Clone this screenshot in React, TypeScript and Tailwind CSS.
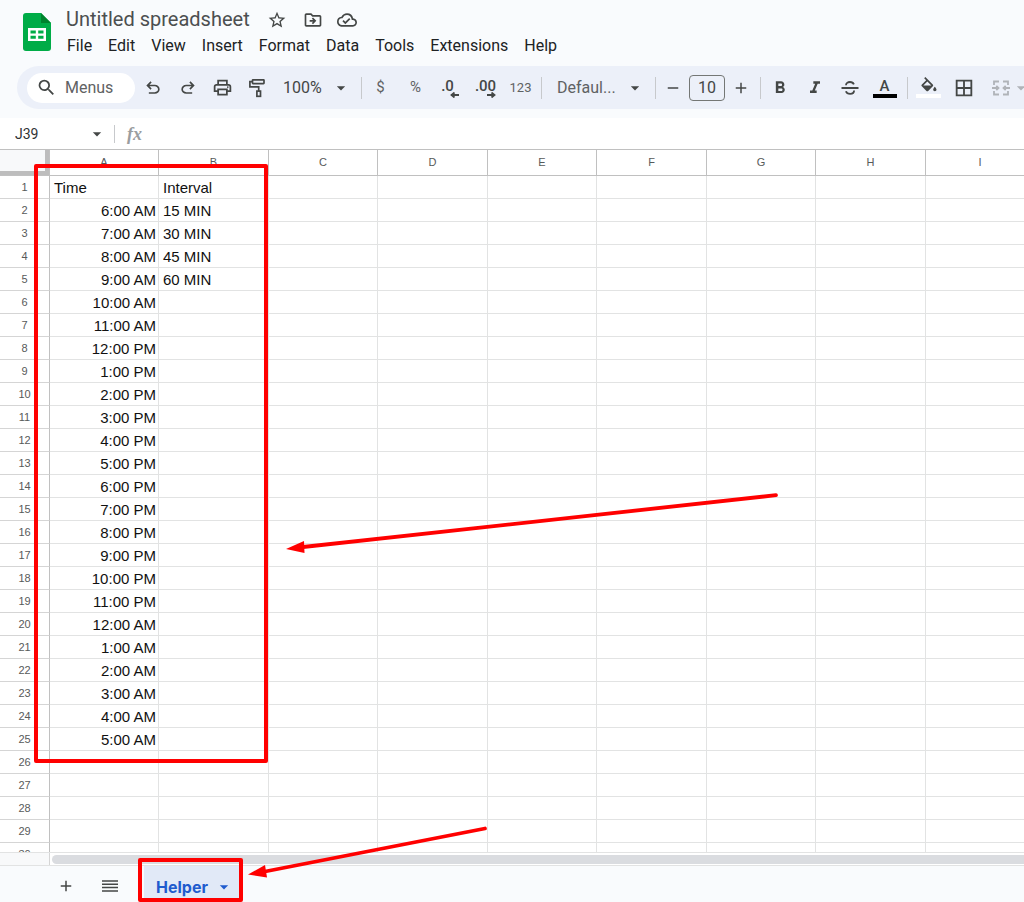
import React from "react";
import {
  MdAdd,
  MdArrowDropDown,
  MdBorderAll,
  MdFormatBold,
  MdFormatColorFill,
  MdFormatItalic,
  MdOutlineCloudDone,
  MdOutlineDriveFileMove,
  MdOutlinePrint,
  MdRemove,
  MdSearch,
  MdStarBorder,
} from "react-icons/md";

const menus = ["File", "Edit", "View", "Insert", "Format", "Data", "Tools", "Extensions", "Help"];

const columns = [
  { name: "A", width: "w-[109px]" },
  { name: "B", width: "w-[110px]" },
  { name: "C", width: "w-[109px]" },
  { name: "D", width: "w-[110px]" },
  { name: "E", width: "w-[109px]" },
  { name: "F", width: "w-[110px]" },
  { name: "G", width: "w-[109px]" },
  { name: "H", width: "w-[110px]" },
  { name: "I", width: "" },
];

const times = [
  "Time", "6:00 AM", "7:00 AM", "8:00 AM", "9:00 AM", "10:00 AM", "11:00 AM", "12:00 PM",
  "1:00 PM", "2:00 PM", "3:00 PM", "4:00 PM", "5:00 PM", "6:00 PM", "7:00 PM", "8:00 PM",
  "9:00 PM", "10:00 PM", "11:00 PM", "12:00 AM", "1:00 AM", "2:00 AM", "3:00 AM", "4:00 AM", "5:00 AM",
];
const intervals = ["Interval", "15 MIN", "30 MIN", "45 MIN", "60 MIN"];
const rows = Array.from({ length: 30 }, (_, i) => i);

function SheetsLogo() {
  return (
    <svg viewBox="0 0 28 38" className="h-[38px] w-7 shrink-0" aria-hidden="true">
      <path d="M3 0h15l10 10v25a3 3 0 0 1-3 3H3a3 3 0 0 1-3-3V3a3 3 0 0 1 3-3z" fill="#00ac47" />
      <path d="M18 0l10 10H18z" fill="#00832d" />
      <path d="M5 15h18v13H5zM7.500 17.500v3h5.300v-3zM15.200 17.500v3h5.300v-3zM7.500 22.800v3h5.300v-3zM15.200 22.800v3h5.300v-3z" fill="#fff" fillRule="evenodd" />
    </svg>
  );
}

function UndoIcon() {
  return (
    <svg viewBox="0 -960 960 960" className="size-5" fill="currentColor" aria-hidden="true">
      <path d="M280-200v-80h284q63 0 109.500-40T720-420q0-60-46.500-100T564-560H312l104 104-56 56-200-200 200-200 56 56-104 104h252q97 0 166.500 63T800-420q0 94-69.500 157T564-200H280Z" />
    </svg>
  );
}

function RedoIcon() {
  return (
    <svg viewBox="0 -960 960 960" className="size-5" fill="currentColor" aria-hidden="true">
      <path d="M396-200q-97 0-166.500-63T160-420q0-94 69.500-157T396-640h252L544-744l56-56 200 200-200 200-56-56 104-104H396q-63 0-109.500 40T240-420q0 60 46.500 100T396-280h284v80H396Z" />
    </svg>
  );
}

function PaintIcon() {
  return (
    <svg viewBox="0 0 20 20" className="size-5" fill="none" stroke="currentColor" strokeWidth="1.7" aria-hidden="true">
      <rect x="4.500" y="1.800" width="11.500" height="3.800" rx="0.500" />
      <path d="M4.500 3.700H1.900v5.200h8.800v4" />
      <rect x="8.900" y="13.100" width="3.600" height="5.200" />
    </svg>
  );
}

function StrikeIcon() {
  return (
    <svg viewBox="0 0 20 20" className="size-5" fill="none" stroke="currentColor" strokeWidth="1.8" aria-hidden="true">
      <path d="M1.500 10h17" />
      <path d="M6 7.200c0-2 1.700-3.200 4-3.200 1.800 0 3.200.8 3.900 2.300M5.900 13.300c.6 1.600 2.200 2.600 4.200 2.600 2.400 0 4-1.200 4-3.300" />
    </svg>
  );
}

function MergeIcon() {
  return (
    <svg viewBox="0 0 20 20" className="size-5 shrink-0" fill="none" stroke="currentColor" strokeWidth="1.800" aria-hidden="true">
      <path d="M8 3.500H3V7M12 3.500h5V7M8 16.500H3V13M12 16.500h5V13M1 10h6M19 10h-6M5.300 7.800L7.500 10l-2.200 2.200M14.700 7.800L12.500 10l2.200 2.200" />
    </svg>
  );
}

function SmallArrow({ flip = false }: { flip?: boolean }) {
  return (
    <svg viewBox="0 0 10 6" className="-ml-1 h-1.5 w-2.5 self-end" fill="none" stroke="currentColor" strokeWidth="1.8" aria-hidden="true">
      {flip ? <path d="M1 3h7M5.500 0.500L8.500 3L5.500 5.500" /> : <path d="M9 3H2M4.500 0.500L1.500 3L4.500 5.500" />}
    </svg>
  );
}

function Tool({ label, children }: { label: string; children: React.ReactNode }) {
  return (
    <button type="button" aria-label={label} className="flex h-8 w-[35px] shrink-0 items-center justify-center">
      {children}
    </button>
  );
}

function Divider() {
  return <span className="mx-px h-[22px] w-px shrink-0 bg-[#c7c9cc]" />;
}

export default function App() {
  return (
    <div className="relative flex h-screen flex-col overflow-hidden bg-[#f9fbfd] font-['Roboto',sans-serif] text-[#444746]">
      <header className="flex h-[66px] shrink-0 items-start gap-[15px] pl-[23px] pt-2">
        <div className="pt-[5px]">
          <SheetsLogo />
        </div>
        <div className="flex flex-col">
          <div className="flex h-[22px] items-center gap-3.5">
            <input aria-label="Document title" defaultValue="Untitled spreadsheet" className="w-[187px] bg-transparent text-xl leading-[22px] text-[#4c4f50] outline-none" />
            <button type="button" aria-label="Star" className="pr-0.5 pt-0.5"><MdStarBorder className="size-5" /></button>
            <button type="button" aria-label="Move" className="pt-0.5"><MdOutlineDriveFileMove className="size-5" /></button>
            <button type="button" aria-label="Document status" className="pt-0.5"><MdOutlineCloudDone className="size-5" /></button>
          </div>
          <nav className="flex h-8 items-center gap-4 pl-px text-base text-[#202224]">
            {menus.map((m) => (
              <button key={m} type="button">{m}</button>
            ))}
          </nav>
        </div>
      </header>

      <div className="ml-[17px] flex h-[43px] shrink-0 items-center overflow-hidden rounded-l-full bg-[#ecf0f9] pl-2.5">
        <label className="flex h-[30px] w-[108px] shrink-0 items-center gap-2 rounded-full bg-white pl-[9px]">
          <MdSearch className="size-[21px] shrink-0" />
          <input aria-label="Search the menus" placeholder="Menus" className="w-16 bg-transparent text-base outline-none placeholder:text-[#5f6263]" />
        </label>
        <Tool label="Undo"><UndoIcon /></Tool>
        <Tool label="Redo"><RedoIcon /></Tool>
        <Tool label="Print"><MdOutlinePrint className="size-[21px]" /></Tool>
        <Tool label="Paint format"><PaintIcon /></Tool>
        <label className="flex w-[85px] shrink-0 items-center pl-2">
          <select aria-label="Zoom" className="w-12 appearance-none bg-transparent text-base outline-none">
            <option>100%</option>
          </select>
          <MdArrowDropDown className="pointer-events-none size-5" />
        </label>
        <Divider />
        <Tool label="Format as currency"><span className="text-[15px] text-[#5f6263]">$</span></Tool>
        <Tool label="Format as percent"><span className="text-[15px] text-[#5f6263]">%</span></Tool>
        <Tool label="Decrease decimal places">
          <span className="flex h-5 items-start text-[15px] font-medium leading-4">.0<SmallArrow /></span>
        </Tool>
        <Tool label="Increase decimal places">
          <span className="flex h-5 items-start text-[15px] font-medium leading-4">.00<span className="-ml-1.5 flex self-end"><SmallArrow flip /></span></span>
        </Tool>
        <Tool label="More formats"><span className="text-[13px] text-[#5f6263]">123</span></Tool>
        <span className="w-0.5 shrink-0" />
        <Divider />
        <label className="flex w-[111px] shrink-0 items-center pl-3.5">
          <select aria-label="Font" className="w-[68px] appearance-none bg-transparent text-base text-[#5f6263] outline-none">
            <option>Defaul...</option>
          </select>
          <MdArrowDropDown className="pointer-events-none size-5" />
        </label>
        <Divider />
        <button type="button" aria-label="Decrease font size" className="flex w-8 shrink-0 justify-center"><MdRemove className="size-[18px]" /></button>
        <input aria-label="Font size" defaultValue="10" className="h-[26px] w-9 shrink-0 rounded-[4px] border border-[#747775] bg-transparent text-center text-base outline-none" />
        <button type="button" aria-label="Increase font size" className="flex w-8 shrink-0 justify-center"><MdAdd className="size-[18px]" /></button>
        <span className="w-0.5 shrink-0" />
        <Divider />
        <Tool label="Bold"><MdFormatBold className="size-5" /></Tool>
        <Tool label="Italic"><MdFormatItalic className="size-5" /></Tool>
        <Tool label="Strikethrough"><StrikeIcon /></Tool>
        <Tool label="Text color">
          <span className="flex w-6 flex-col items-center border-b-4 border-black text-[15px] font-medium leading-4">A</span>
        </Tool>
        <span className="w-1 shrink-0" />
        <Divider />
        <span className="w-0.5 shrink-0" />
        <Tool label="Fill color">
          <span className="flex w-[25px] flex-col items-center border-b-4 border-white pb-px">
            <svg viewBox="0 0 24 19" className="h-4 w-5" aria-hidden="true"><MdFormatColorFill size={24} /></svg>
          </span>
        </Tool>
        <Tool label="Borders"><MdBorderAll className="size-[22px]" /></Tool>
        <button type="button" aria-label="Merge cells" className="flex h-8 shrink-0 items-center pl-2.5 text-[#b0b3b8]">
          <MergeIcon />
          <MdArrowDropDown className="size-5" />
        </button>
      </div>

      <div className="mt-[9px] flex h-[31px] shrink-0 items-center bg-white pl-[15px]">
        <input aria-label="Name box" defaultValue="J39" className="w-[72px] bg-transparent text-sm text-[#303335] outline-none" />
        <button type="button" aria-label="Named ranges"><MdArrowDropDown className="size-5" /></button>
        <span className="ml-[7px] h-[18px] w-px bg-[#c7c9cc]" />
        <label htmlFor="formula" className="pl-3 font-['Liberation_Serif',serif] text-lg font-bold italic text-[#9a9da0]">fx</label>
        <input id="formula" className="ml-3 flex-1 bg-transparent text-sm outline-none" />
      </div>

      <main className="min-h-0 flex-1 overflow-hidden border-t border-[#c0c0c0] bg-white">
        <table className="w-full min-w-[1035px] table-fixed border-separate border-spacing-0 font-['Liberation_Sans',Arial,sans-serif]">
          <colgroup>
            <col className="w-[50px]" />
            {columns.map((c) => (
              <col key={c.name} className={c.width} />
            ))}
          </colgroup>
          <thead>
            <tr className="h-[26px] text-[11px] text-[#575a5a]">
              <td className="border-b border-r border-[#c0c0c0] p-0">
                <div className="h-[25px] border-b-4 border-r-4 border-[#bdbdbd] bg-[#f8f9fa]" />
              </td>
              {columns.map((c) => (
                <th key={c.name} scope="col" className="border-b border-r border-[#c0c0c0] p-0 font-normal">{c.name}</th>
              ))}
            </tr>
          </thead>
          <tbody>
            {rows.map((r) => (
              <tr key={r} className="h-[23px] text-[15px] leading-5 text-[#111111]">
                <th scope="row" className="border-b border-r border-b-[#d5d5d5] border-r-[#c0c0c0] px-0 pb-px pt-px text-[11px] font-normal leading-5 text-[#575a5a]">{r + 1}</th>
                {columns.map((c, i) => (
                  <td
                    key={c.name}
                    className={
                      i === 0 && r > 0
                        ? "border-b border-r border-[#e2e3e3] pb-0 pl-1 pr-0.5 pt-0.5 text-right"
                        : "border-b border-r border-[#e2e3e3] pb-0 pl-1 pr-0.5 pt-0.5 text-left"
                    }
                  >
                    {i === 0 ? times[r] : i === 1 ? intervals[r] : null}
                  </td>
                ))}
              </tr>
            ))}
          </tbody>
        </table>
      </main>

      <div className="flex h-[14px] shrink-0 border-y border-[#e2e3e3] bg-white">
        <div className="w-[50px] border-r border-[#d5d5d5] bg-[#f8f9fa]" />
        <div className="flex flex-1 items-center overflow-hidden pl-0.5">
          <div className="h-[9px] flex-1 rounded-l-full bg-[#dadce0]" />
        </div>
      </div>

      <footer className="flex h-9 shrink-0 items-start">
        <button type="button" aria-label="Add sheet" className="ml-12 flex h-9 w-9 items-center justify-center pt-1"><MdAdd className="size-[18px]" /></button>
        <button type="button" aria-label="All sheets" className="ml-2 flex h-9 w-9 items-center justify-center pt-1">
          <svg viewBox="0 0 16 12" className="h-3 w-4" stroke="currentColor" strokeWidth="1.500" aria-hidden="true">
            <path d="M0 1h16M0 4.300h16M0 7.600h16M0 10.900h16" />
          </svg>
        </button>
        <button type="button" className="ml-4 flex h-9 w-[98px] items-center gap-1.5 bg-[#e1e9f7] pl-3 pt-1.5 font-['Inter',sans-serif] text-base font-bold text-[#1f5bce]">
          Helper
          <MdArrowDropDown className="size-5" />
        </button>
      </footer>

      <div className="pointer-events-none absolute left-[34px] top-[164px] h-[599px] w-[234px] rounded-[2px] border-4 border-[#ff0000]" />
      <div className="pointer-events-none absolute left-[138px] top-[858px] h-11 w-[105px] rounded-[2px] border-4 border-[#ff0000]" />
      <svg viewBox="0 0 1024 902" width="1024" height="902" className="pointer-events-none absolute left-0 top-0" aria-hidden="true">
        <g stroke="#ff0000" strokeWidth="3.800" strokeLinecap="round">
          <path d="M303 547L776 495.200" />
          <path d="M265 871.500L485 828.500" />
        </g>
        <path d="M286 549L304 541L304.500 553Z" fill="#ff0000" />
        <path d="M248 874.500L265 865L267 877.500Z" fill="#ff0000" />
      </svg>
    </div>
  );
}
